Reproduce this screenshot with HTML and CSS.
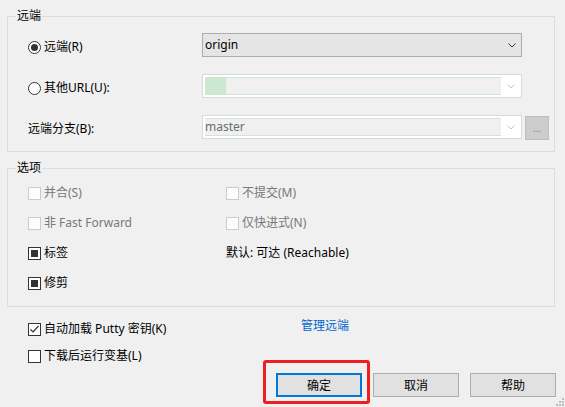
FILE: index.html
```html
<!DOCTYPE html>
<html lang="zh-CN">
<head>
<meta charset="utf-8">
<title>拉取</title>
<link rel="stylesheet" href="styles.css">
</head>
<body>
<div class="dialog">
  <div class="group remote">
    <span class="group-title">远端</span>
    <div class="remote-grid">
      <label class="opt lbl"><span class="radio checked"></span>远端(R)</label>
      <div class="combo combo-list"><span class="combo-text">origin</span><svg class="chev" width="8" height="5" viewBox="0 0 8 5"><polyline points="0.5,0.5 4,4 7.5,0.5" fill="none" stroke="#333" stroke-width="1"/></svg></div>
      <div></div>

      <label class="opt lbl"><span class="radio"></span>其他URL(U):</label>
      <div class="combo combo-edit"><div class="edit"><span class="mark"></span></div><svg class="chev" width="8" height="5" viewBox="0 0 8 5"><polyline points="0.5,0.5 4,4 7.5,0.5" fill="none" stroke="#c4c4c4" stroke-width="1"/></svg></div>
      <div></div>

      <span class="lbl plain">远端分支(B):</span>
      <div class="combo combo-edit"><div class="edit"><span class="edit-text">master</span></div><svg class="chev" width="8" height="5" viewBox="0 0 8 5"><polyline points="0.5,0.5 4,4 7.5,0.5" fill="none" stroke="#c4c4c4" stroke-width="1"/></svg></div>
      <button class="dots" disabled>...</button>
    </div>
  </div>

  <div class="group options">
    <span class="group-title">选项</span>
    <div class="options-grid">
      <label class="opt disabled"><span class="box"></span>并合(S)</label>
      <label class="opt disabled"><span class="box"></span>不提交(M)</label>
      <label class="opt disabled"><span class="box"></span>非 Fast Forward</label>
      <label class="opt disabled"><span class="box"></span>仅快进式(N)</label>
      <label class="opt"><span class="box mixed"></span>标签</label>
      <span class="opt">默认: 可达 (Reachable)</span>
      <label class="opt"><span class="box mixed"></span>修剪</label>
      <span></span>
    </div>
  </div>

  <div class="bottom">
    <div class="bottom-row">
      <label class="opt"><span class="box checked"><svg width="11" height="11" viewBox="0 0 11 11"><polyline points="1.5,5.5 4,8 9.5,2" fill="none" stroke="#333" stroke-width="1.2"/></svg></span>自动加载 Putty 密钥(K)</label>
      <a class="link" href="#">管理远端</a>
    </div>
    <div class="bottom-row">
      <label class="opt"><span class="box"></span>下载后运行变基(L)</label>
    </div>
    <div class="buttons">
      <span class="highlight"><button class="btn default">确定</button></span>
      <button class="btn">取消</button>
      <button class="btn">帮助</button>
    </div>
  </div>
</div>
<svg class="grip" width="8" height="8" viewBox="0 0 8 8"><rect x="6" y="0" width="2" height="2" fill="#bcbcbc"/><rect x="3" y="3" width="2" height="2" fill="#bcbcbc"/><rect x="6" y="3" width="2" height="2" fill="#bcbcbc"/><rect x="0" y="6" width="2" height="2" fill="#bcbcbc"/><rect x="3" y="6" width="2" height="2" fill="#bcbcbc"/><rect x="6" y="6" width="2" height="2" fill="#bcbcbc"/></svg>
</body>
</html>
```

FILE: styles.css
```css
* { box-sizing: border-box; }
html, body { margin: 0; padding: 0; }
body {
  width: 565px;
  height: 407px;
  overflow: hidden;
  background: #f0f0f0;
  font-family: "Noto Sans", "Noto Sans CJK SC", sans-serif;
  font-size: 12px;
  line-height: 16px;
  color: #000;
  position: relative;
}
.dialog {
  padding: 16px 10px 0 7px;
}
.group {
  position: relative;
  border: 1px solid #dcdcdc;
}
.group-title {
  position: absolute;
  top: -9px;
  left: 8px;
  padding: 0 1px;
  background: #f0f0f0;
  line-height: 16px;
}
.remote { padding: 16px 0 12px 20px; }
.remote-grid {
  display: grid;
  grid-template-columns: 171px 320px 24px;
  grid-auto-rows: 24px;
  column-gap: 3px;
  row-gap: 17px;
}
.opt {
  display: flex;
  align-items: center;
  gap: 3px;
  white-space: nowrap;
}
.lbl { margin-top: 6px; height: 16px; }
.plain { display: flex; align-items: center; }
.radio {
  width: 13px;
  height: 13px;
  border: 1px solid #333;
  border-radius: 50%;
  background: #fff;
  display: flex;
  align-items: center;
  justify-content: center;
  flex: none;
}
.radio.checked::after {
  content: "";
  width: 7px;
  height: 7px;
  border-radius: 50%;
  background: #333;
}
.combo {
  display: flex;
  align-items: center;
  height: 24px;
  border: 1px solid #adadad;
}
.combo-list {
  background: #e5e5e5;
  padding: 0 5px 0 2px;
}
.combo-text { flex: 1; }
.chev { flex: none; }
.combo-edit {
  border-color: #d9d9d9;
  background: #fff;
  padding: 2px 5px 2px 2px;
  align-items: stretch;
}
.combo-edit .chev { align-self: center; margin-left: 6px; }
.edit {
  width: 296px;
  border-top: 1px solid #cde8d0;
  border-bottom: 1px solid #cde8d0;
  background: #f0f0f0;
  display: flex;
  align-items: center;
}
.mark {
  width: 21px;
  align-self: stretch;
  background: #cde8d0;
}
.edit-text { color: #6d6d6d; }
.dots {
  margin-top: 1px;
  height: 24px;
  border: 1px solid #bfbfbf;
  background: #cccccc;
  color: #8a8a8a;
  font-family: inherit;
  font-size: 10px;
  padding: 0;
  line-height: 14px;
}
.options {
  margin-top: 16px;
  padding: 16px 0 15px 20px;
}
.options-grid {
  display: grid;
  grid-template-columns: 198px 1fr;
  grid-auto-rows: 16px;
  row-gap: 14px;
}
.box {
  width: 13px;
  height: 13px;
  border: 1px solid #333;
  background: #fff;
  flex: none;
  display: flex;
  align-items: center;
  justify-content: center;
}
.box.mixed::after {
  content: "";
  width: 7px;
  height: 7px;
  background: #333;
}
.box svg { display: block; }
.disabled { color: #787878; }
.disabled .box { border-color: #cccccc; background: #fcfcfc; }
.bottom { padding-left: 21px; padding-top: 14px; }
.bottom-row {
  display: flex;
  align-items: flex-start;
  height: 16px;
}
.bottom-row + .bottom-row { margin-top: 11px; }
.bottom-row .opt { width: 273px; }
.link {
  color: #0066cc;
  text-decoration: none;
  margin-top: -3px;
}
.buttons {
  display: flex;
  justify-content: flex-end;
  gap: 11px;
  margin-top: 9px;
  margin-right: -1px;
}
.btn {
  width: 86px;
  height: 24px;
  border: 1px solid #adadad;
  background: #e1e1e1;
  font-family: inherit;
  font-size: 12px;
  color: #000;
  padding: 0;
}
.btn.default { border: 2px solid #0078d7; }
.highlight {
  position: relative;
  display: flex;
}
.highlight::after {
  content: "";
  position: absolute;
  top: -13px;
  left: -13px;
  right: -8px;
  bottom: -7px;
  border: 3px solid #f01e1e;
  border-radius: 3px;
  pointer-events: none;
}
.grip {
  position: absolute;
  right: 1px;
  bottom: 1px;
}
```
